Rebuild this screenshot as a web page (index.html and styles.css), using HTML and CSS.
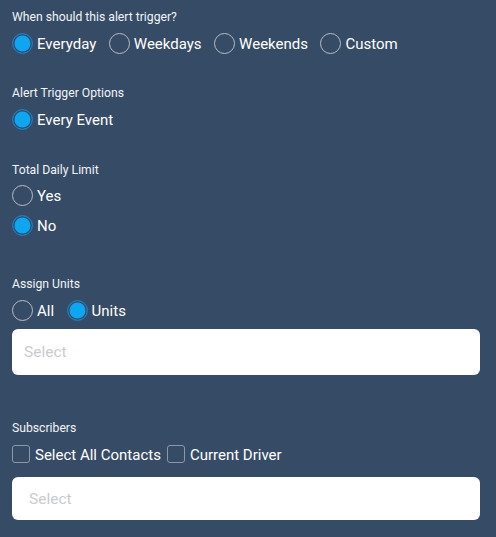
FILE: index.html
```html
<!DOCTYPE html>
<html>
<head>
<meta charset="utf-8">
<link rel="stylesheet" href="styles.css">
</head>
<body>
<div class="form">
  <div class="field f-trigger">
    <div class="label">When should this alert trigger?</div>
    <div class="options">
      <label class="opt"><span class="radio on"></span><span>Everyday</span></label>
      <label class="opt"><span class="radio"></span><span>Weekdays</span></label>
      <label class="opt"><span class="radio"></span><span>Weekends</span></label>
      <label class="opt"><span class="radio"></span><span>Custom</span></label>
    </div>
  </div>
  <div class="field f-options">
    <div class="label">Alert Trigger Options</div>
    <div class="options">
      <label class="opt"><span class="radio on"></span><span>Every Event</span></label>
    </div>
  </div>
  <div class="field f-limit">
    <div class="label">Total Daily Limit</div>
    <div class="options column">
      <label class="opt"><span class="radio"></span><span>Yes</span></label>
      <label class="opt"><span class="radio on"></span><span>No</span></label>
    </div>
  </div>
  <div class="field f-units">
    <div class="label">Assign Units</div>
    <div class="options">
      <label class="opt"><span class="radio"></span><span>All</span></label>
      <label class="opt"><span class="radio on"></span><span>Units</span></label>
    </div>
    <div class="select s-units">Select</div>
  </div>
  <div class="field f-subs">
    <div class="label">Subscribers</div>
    <div class="options tight">
      <label class="opt"><span class="check"></span><span>Select All Contacts</span></label>
      <label class="opt"><span class="check"></span><span>Current Driver</span></label>
    </div>
    <div class="select s-subs">Select</div>
  </div>
</div>
</body>
</html>
```
FILE: styles.css
```css
html, body {
  margin: 0;
  padding: 0;
  background: #364b66;
  width: 496px;
  height: 537px;
  overflow: hidden;
}
body {
  font-family: Roboto, "Liberation Sans", sans-serif;
  color: #ffffff;
}
.form {
  padding: 9px 16px 0 12px;
  display: flex;
  flex-direction: column;
}
.label {
  font-size: 12.2px;
  line-height: 16px;
  height: 16px;
  color: #f2f4f7;
}
.options {
  display: flex;
  align-items: center;
  gap: 12.5px;
  margin-top: 6px;
}
.options.column {
  flex-direction: column;
  align-items: flex-start;
  gap: 6px;
  margin-top: 5px;
}
.options.tight {
  gap: 6px;
}
.opt {
  display: flex;
  align-items: center;
  gap: 4px;
  height: 24px;
  font-size: 15px;
  line-height: 24px;
  color: #ffffff;
}
.opt span:last-child {
  padding-top: 1px;
}
.radio {
  box-sizing: border-box;
  width: 21px;
  height: 21px;
  border-radius: 50%;
  border: 1.5px solid #b7bdc6;
  flex: none;
}
.radio.on {
  border: 1.5px solid #1f78bd;
  background: #0ea5f1;
  box-shadow: inset 0 0 0 1.5px #364b66;
}
.check {
  box-sizing: border-box;
  width: 18px;
  height: 18px;
  border-radius: 3px;
  border: 1.5px solid #8d97a5;
  flex: none;
  margin-right: 1px;
}
.select {
  box-sizing: border-box;
  background: #ffffff;
  border-radius: 6px;
  color: #c9cbce;
  font-size: 15.5px;
  display: flex;
  align-items: center;
}
.s-units {
  margin-top: 7px;
  height: 46px;
  padding-left: 12px;
}
.s-subs {
  margin-top: 11px;
  height: 43px;
  padding-left: 17px;
}
.f-options { margin-top: 30px; }
.f-limit { margin-top: 31px; }
.f-units { margin-top: 39px; }
.f-subs { margin-top: 45px; }
```
